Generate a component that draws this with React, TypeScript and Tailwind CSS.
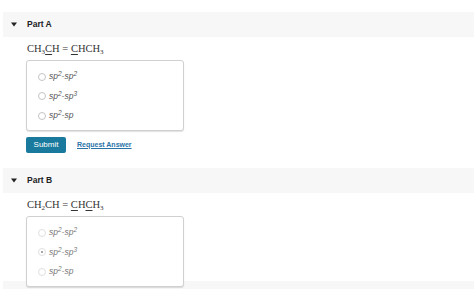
import React from "react";

const serif = { fontFamily: '"Liberation Serif", "Times New Roman", serif' };

function Tri() {
  return (
    <svg width="6" height="5" viewBox="0 0 6 5" className="block">
      <path d="M0 0.5 L6 0.5 L3 4.5 Z" fill="#222" />
    </svg>
  );
}

function Header({ label }: { label: string }) {
  return (
    <div className="ml-[3px] h-[25px] bg-[#f7f7f7] flex items-center">
      <div className="ml-[8px] w-[16px]">
        <Tri />
      </div>
      <span className="text-[8.5px] font-bold text-[#222]">{label}</span>
    </div>
  );
}

function U({ children }: { children: React.ReactNode }) {
  return <span className="underline underline-offset-[2px] decoration-[0.5px]">{children}</span>;
}

function Sub({ children }: { children: React.ReactNode }) {
  return <span className="text-[7px] relative top-[2px]">{children}</span>;
}

function Sup({ children }: { children: React.ReactNode }) {
  return <span className="text-[6.5px] relative -top-[3px]">{children}</span>;
}

function Radio({ selected, dim }: { selected?: boolean; dim?: boolean }) {
  return (
    <div
      className={`w-[8px] h-[8px] rounded-full border ${dim ? "border-[#e0e0e0]" : "border-[#c4c4c4]"} bg-white flex items-center justify-center`}
    >
      {selected && <div className="w-[2px] h-[2px] rounded-full bg-[#888]" />}
    </div>
  );
}

function Opt({ a, b, selected, dim }: { a: string; b: string; selected?: boolean; dim?: boolean }) {
  return (
    <div className="flex items-center h-[19.5px]">
      <div className="ml-[11px] w-[11px]">
        <Radio selected={selected} dim={dim} />
      </div>
      <span className={`italic text-[8.5px] ${dim ? "text-[#777]" : "text-[#555]"}`}>
        sp<Sup>2</Sup>-{a}
        {b && <Sup>{b}</Sup>}
      </span>
    </div>
  );
}

function Box({ dim, sel }: { dim?: boolean; sel?: number }) {
  return (
    <div className="relative z-10 ml-[26px] w-[158px] h-[71px] bg-white border border-[#d0d0d0] rounded-[3px] shadow-[0_1px_1px_rgba(0,0,0,0.12)] pt-[6px]">
      <Opt a="sp" b="2" dim={dim} selected={sel === 0} />
      <Opt a="sp" b="3" dim={dim} selected={sel === 1} />
      <Opt a="sp" b="" dim={dim} selected={sel === 2} />
    </div>
  );
}

export default function App() {
  return (
    <div
      className="w-[474px] h-[289px] overflow-hidden bg-white pt-[12px]"
      style={{ fontFamily: '"Liberation Sans", Arial, sans-serif' }}
    >
      <Header label="Part A" />
      <div className="pl-[27px] h-[23px] flex items-center text-[10.5px] text-[#333]" style={serif}>
        <span>
          CH<Sub>3</Sub>
          <U>C</U>H&nbsp;=&nbsp;<U>C</U>HCH<Sub>3</Sub>
        </span>
      </div>
      <Box />
      <div className="flex items-center mt-[6px] ml-[26px] h-[16px]">
        <div className="w-[40px] h-[16px] bg-[#1a7a9e] rounded-[2px] flex items-center justify-center text-white text-[8px]">
          Submit
        </div>
        <span className="ml-[11px] text-[7px] font-bold text-[#2a74a8] underline">Request Answer</span>
      </div>
      <div className="h-[15px]" />
      <Header label="Part B" />
      <div className="pl-[27px] h-[23px] flex items-center text-[10.5px] text-[#333]" style={serif}>
        <span>
          CH<Sub>2</Sub>CH&nbsp;=&nbsp;<U>C</U>H<U>C</U>H<Sub>3</Sub>
        </span>
      </div>
      <Box dim sel={1} />
      <div className="-mt-[6px] ml-[3px] h-[10px] bg-[#f7f7f7]" />
    </div>
  );
}
